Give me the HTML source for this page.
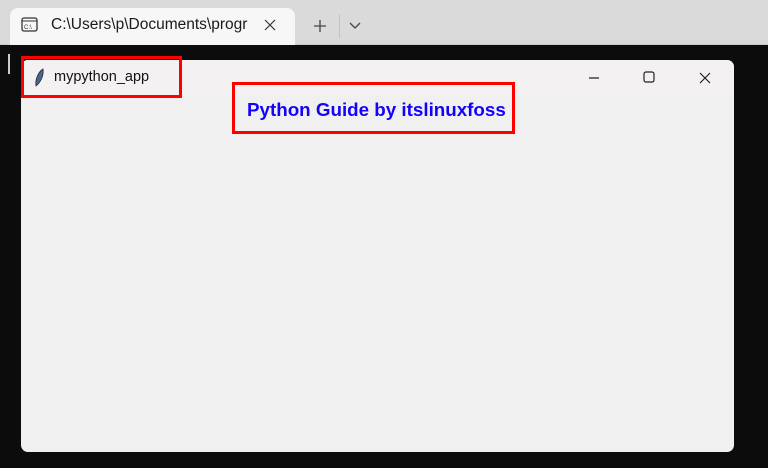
<!DOCTYPE html>
<html><head><style>
body{margin:0;width:768px;height:468px;background:#0c0c0c;position:relative;overflow:hidden;font-family:"Liberation Sans",sans-serif}
.top{position:absolute;left:0;top:0;width:768px;height:44px;background:#dadada;border-bottom:1px solid #c8c8c8}
.tab{position:absolute;left:10px;top:8px;width:285px;height:37px;background:#f7f7f7;border-radius:8px 8px 0 0}
.win{position:absolute;left:21px;top:60px;width:713px;height:392px;background:#f0f0f0;border-radius:7px;overflow:hidden}
.title{height:36px;background:#f3f1f1}
.red{position:absolute;border:3px solid #ff0000;box-sizing:border-box}
</style></head><body>
<div class="top"></div>
<div class="tab">
<svg style="position:absolute;left:11px;top:9px" width="18" height="16"><rect x="1" y="1" width="15" height="13" rx="2" fill="none" stroke="#333" stroke-width="1.3"/><line x1="1" y1="4" x2="16" y2="4" stroke="#333"/><text x="3" y="12" font-size="6" fill="#333" font-family="Liberation Sans">C:\</text></svg>
<div style="position:absolute;left:41px;top:8px;font-size:15.5px;color:#1a1a1a;width:197px;overflow:hidden;white-space:nowrap">C:\Users\p\Documents\programs</div>
<svg style="position:absolute;left:254px;top:11px" width="12" height="12"><path d="M1 1L11 11M11 1L1 11" stroke="#333" stroke-width="1.2"/></svg>
</div>
<svg style="position:absolute;left:313px;top:19px" width="14" height="14"><path d="M7 1V13M1 7H13" stroke="#444" stroke-width="1.3"/></svg>
<div style="position:absolute;left:339px;top:14px;width:1px;height:24px;background:#c4c4c4"></div>
<svg style="position:absolute;left:349px;top:22px" width="12" height="8"><path d="M1 1L6 6L11 1" stroke="#444" stroke-width="1.3" fill="none"/></svg>
<div style="position:absolute;left:8px;top:54px;width:2px;height:20px;background:#ccc"></div>
<div class="win"><div class="title"></div>
<svg style="position:absolute;left:12px;top:8px" width="12" height="20"><path d="M3 18C2 12 5 4 10 1C11 7 8 14 3 18Z" fill="#4b6584" stroke="#1e2a3a" stroke-width="0.8"/></svg>
<div style="position:absolute;left:33px;top:9px;font-size:14.5px;color:#111">mypython_app</div>
<svg style="position:absolute;left:567px;top:12px" width="12" height="12"><path d="M1 6H11" stroke="#222" stroke-width="1.2"/></svg>
<svg style="position:absolute;left:622px;top:11px" width="13" height="13"><rect x="1" y="1" width="10" height="10" rx="2" fill="none" stroke="#222" stroke-width="1.2"/></svg>
<svg style="position:absolute;left:678px;top:12px" width="12" height="12"><path d="M1 1L11 11M11 1L1 11" stroke="#222" stroke-width="1.2"/></svg>
<div style="position:absolute;left:226px;top:39px;font-size:18.8px;font-weight:bold;color:#1400ff">Python Guide by itslinuxfoss</div>
</div>
<div class="red" style="left:21px;top:56px;width:161px;height:42px"></div>
<div class="red" style="left:232px;top:82px;width:283px;height:52px"></div>
</body></html>
